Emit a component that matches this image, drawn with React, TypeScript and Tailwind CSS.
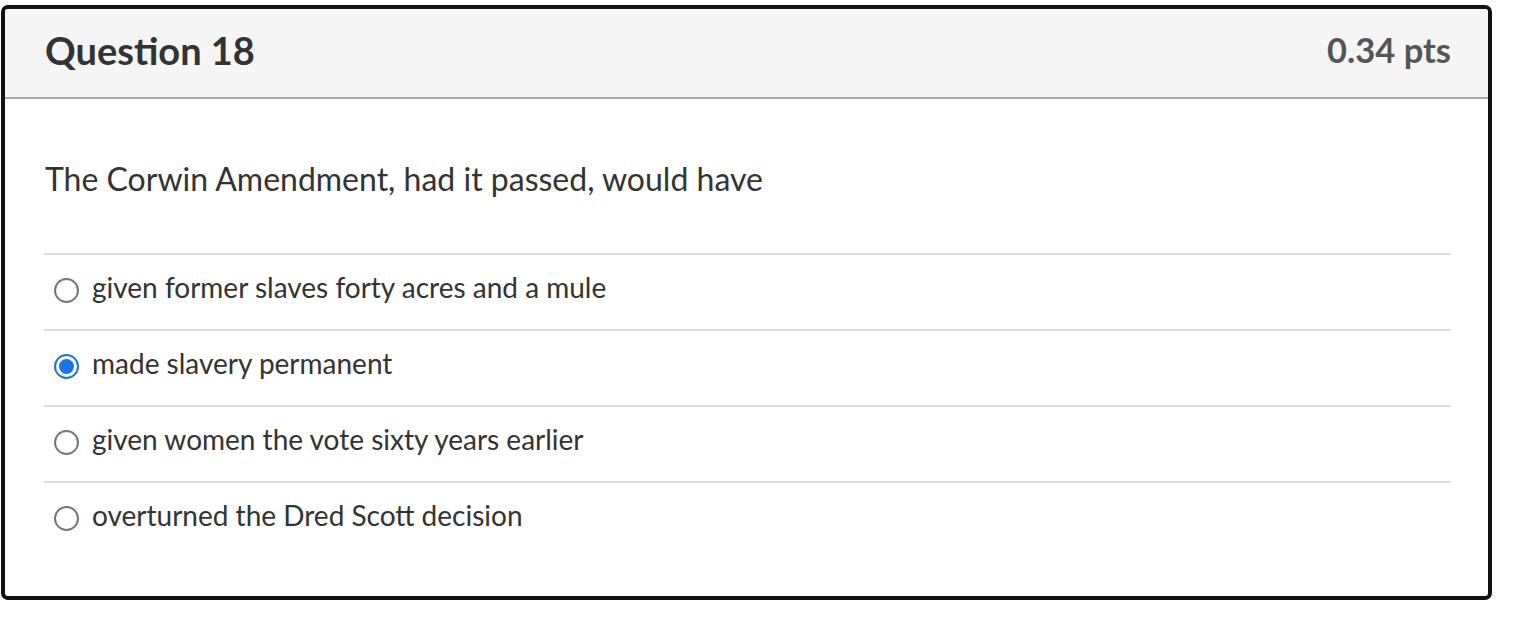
import { useState } from 'react';

const answers = [
  'given former slaves forty acres and a mule',
  'made slavery permanent',
  'given women the vote sixty years earlier',
  'overturned the Dred Scott decision',
];

function Radio({ checked }: { checked: boolean }) {
  return (
    <span
      className={`flex h-[25px] w-[25px] shrink-0 items-center justify-center rounded-full border-2 bg-white ${
        checked ? 'border-[#1a73e8]' : 'border-[#767676]'
      }`}
    >
      {checked && <span className="h-[15px] w-[15px] rounded-full bg-[#1a73e8]" />}
    </span>
  );
}

export default function App() {
  const [selected, setSelected] = useState(1);

  return (
    <div className="min-h-screen bg-white pl-[1px] pt-[5px] font-['Lato','Liberation_Sans',sans-serif] text-[#333]">
      <div className="w-[1491px] h-[595px] overflow-hidden rounded-[7px] border-4 border-[#111]">
        {/* Header */}
        <div className="flex h-[90px] items-center justify-between border-b-2 border-[#aaa] bg-[#f5f5f5] pb-[6px] pl-[40px] pr-[37px]">
          <h2 className="text-[38px] font-bold leading-none text-[#333]">Question 18</h2>
          <span className="text-[34.5px] font-bold leading-none text-[#555]">0.34 pts</span>
        </div>

        {/* Body */}
        <div className="pl-[39px] pr-[37px]">
          <p className="pt-[60px] pb-[54px] pl-[1px] text-[32px] leading-[40px]">
            The Corwin Amendment, had it passed, would have
          </p>
          <div>
            {answers.map((answer, i) => (
              <label
                key={answer}
                onClick={() => setSelected(i)}
                className="flex h-[76px] cursor-pointer items-center gap-[13px] border-t-2 border-[#ddd] pb-[4px] pl-[10px] text-[28px]"
              >
                <Radio checked={selected === i} />
                <span className="pb-[6px]">{answer}</span>
              </label>
            ))}
          </div>
        </div>
      </div>
    </div>
  );
}
